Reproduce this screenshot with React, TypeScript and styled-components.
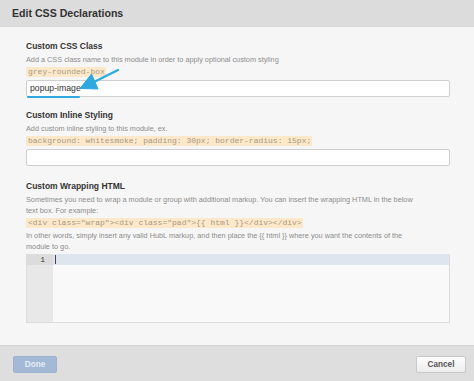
import React from "react";
import styled, { createGlobalStyle } from "styled-components";

const Global = createGlobalStyle`
  html, body { margin: 0; padding: 0; }
  body { font-family: "Liberation Sans", Arial, sans-serif; background: #f6f6f6; }
`;

const Modal = styled.div`
  width: 474px;
  height: 381px;
  display: flex;
  flex-direction: column;
  background: #f6f6f6;
  overflow: hidden;
`;

const Header = styled.div`
  height: 27px;
  flex: none;
  background: #dcdcdc;
  border-bottom: 1px solid #d6d6d6;
  box-sizing: border-box;
  padding-left: 12px;
  display: flex;
  align-items: center;
`;

const Title = styled.h1`
  margin: 0;
  font-size: 10.6px;
  font-weight: bold;
  color: #333;
  padding-bottom: 1px;
`;

const Body = styled.div`
  flex: 1;
  padding: 14px 24px 0 26px;
  display: flex;
  flex-direction: column;
`;

const Section = styled.section<{ $gap: number }>`
  margin-top: ${(p) => p.$gap}px;
  display: flex;
  flex-direction: column;
  align-items: flex-start;
`;

const Label = styled.div`
  font-size: 8.5px;
  font-weight: bold;
  color: #333;
  line-height: 11px;
`;

const Desc = styled.p`
  margin: 2px 0 0;
  font-size: 7.3px;
  line-height: 11px;
  color: #8c8c8c;
`;

const Code = styled.code`
  display: inline-block;
  margin-top: 2px;
  padding: 0 1px 0 2px;
  height: 10px;
  line-height: 10px;
  font-family: "Liberation Mono", "Courier New", monospace;
  font-size: 8px;
  color: #a89881;
  background: #fde8ca;
  border-radius: 1px;
  white-space: pre;
`;

const InputWrap = styled.div`
  position: relative;
  align-self: stretch;
  margin-top: 3px;
`;

const Input = styled.div`
  box-sizing: border-box;
  height: 17px;
  background: #fff;
  border: 1px solid #cfcfcf;
  border-radius: 2px;
  padding-left: 3px;
  font-size: 8.7px;
  line-height: 15px;
  color: #333;
`;

const Underline = styled.span`
  position: absolute;
  left: 1px;
  top: 15.5px;
  width: 53px;
  height: 2.5px;
  border-radius: 2px;
  background: #2ea9df;
`;

const ArrowSvg = styled.svg`
  position: absolute;
  left: 0;
  top: -16px;
  overflow: visible;
`;

const Editor = styled.div`
  align-self: stretch;
  margin-top: 2px;
  height: 68px;
  display: flex;
  border: 1px solid #dcdcdc;
  border-top: none;
  background: #f9f9f9;
`;

const Gutter = styled.div`
  width: 26px;
  background: #e8e8e8;
  display: flex;
  flex-direction: column;
`;

const LineNo = styled.div`
  height: 11px;
  line-height: 11px;
  padding-right: 8px;
  text-align: right;
  font-family: "Liberation Mono", "Courier New", monospace;
  font-size: 8px;
  color: #333;
  background: #dcdcdc;
`;

const Lines = styled.div`
  flex: 1;
  display: flex;
  flex-direction: column;
`;

const ActiveLine = styled.div`
  height: 11px;
  background: #dfe5ee;
  padding-left: 2px;
  display: flex;
  align-items: center;
`;

const Cursor = styled.span`
  width: 1px;
  height: 9px;
  background: #444;
`;

const Footer = styled.div`
  height: 36px;
  flex: none;
  box-sizing: border-box;
  background: #dedede;
  border-top: 1px solid #d4d4d4;
  padding: 10px 8px 0 13px;
  display: flex;
  justify-content: space-between;
  align-items: flex-start;
`;

const Button = styled.button<{ $primary?: boolean }>`
  box-sizing: border-box;
  height: 17px;
  padding: 0;
  width: ${(p) => (p.$primary ? 44 : 50)}px;
  font-family: "Liberation Sans", Arial, sans-serif;
  font-size: 8.2px;
  font-weight: bold;
  border-radius: 2px;
  color: ${(p) => (p.$primary ? "#e6edf7" : "#555")};
  background: ${(p) =>
    p.$primary ? "#a3b9d6" : "linear-gradient(#fdfdfd, #ececec)"};
  border: 1px solid ${(p) => (p.$primary ? "#9db2cf" : "#c9c9c9")};
`;

export default function App() {
  return (
    <>
      <Global />
      <Modal>
        <Header>
          <Title>Edit CSS Declarations</Title>
        </Header>
        <Body>
          <Section $gap={0}>
            <Label>Custom CSS Class</Label>
            <Desc>Add a CSS class name to this module in order to apply optional custom styling</Desc>
            <Code>grey-rounded-box</Code>
            <InputWrap>
              <Input>popup-image</Input>
              <Underline />
              <ArrowSvg width="100" height="36" viewBox="0 0 100 36">
                <path d="M92 6 Q80 12 68 18" stroke="#2ea9df" strokeWidth="2.2" fill="none" strokeLinecap="round" />
                <path d="M54 24.5 L65.5 10 L72 25 Z" fill="#2ea9df" stroke="#2ea9df" strokeWidth="1" strokeLinejoin="round" />
              </ArrowSvg>
            </InputWrap>
          </Section>
          <Section $gap={13}>
            <Label>Custom Inline Styling</Label>
            <Desc>Add custom inline styling to this module, ex.</Desc>
            <Code>background: whitesmoke; padding: 30px; border-radius: 15px;</Code>
            <InputWrap>
              <Input />
            </InputWrap>
          </Section>
          <Section $gap={15}>
            <Label>Custom Wrapping HTML</Label>
            <Desc>
              Sometimes you need to wrap a module or group with additional markup. You can insert the wrapping HTML in the below
              <br />
              text box. For example:
            </Desc>
            <Code>{'<div class="wrap"><div class="pad">{{ html }}</div></div>'}</Code>
            <Desc>
              In other words, simply insert any valid HubL markup, and then place the {"{{ html }}"} where you want the contents of the
              <br />
              module to go.
            </Desc>
            <Editor>
              <Gutter>
                <LineNo>1</LineNo>
              </Gutter>
              <Lines>
                <ActiveLine>
                  <Cursor />
                </ActiveLine>
              </Lines>
            </Editor>
          </Section>
        </Body>
        <Footer>
          <Button $primary>Done</Button>
          <Button>Cancel</Button>
        </Footer>
      </Modal>
    </>
  );
}
